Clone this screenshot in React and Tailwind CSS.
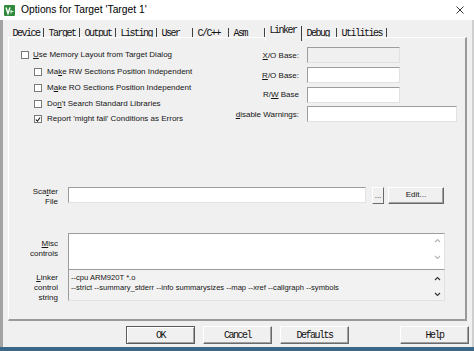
import React from "react";

const sans = "font-['Liberation_Sans',Arial,sans-serif]";
const mono = "font-['Liberation_Mono','Courier_New',monospace]";

const tabs = [
  { name: "Device", w: "w-[36px]" },
  { name: "Target", w: "w-[36px]" },
  { name: "Output", w: "w-[36px]" },
  { name: "Listing", w: "w-[41px]" },
  { name: "User", w: "w-[36px]" },
  { name: "C/C++", w: "w-[36px]" },
  { name: "Asm", w: "w-[36px]" },
  { name: "Linker", w: "w-[37px]", active: true },
  { name: "Debug", w: "w-[35px]" },
  { name: "Utilities", w: "w-[50px]" },
];

const U = ({ children }) => <span className="underline underline-offset-1">{children}</span>;

const Check = ({ checked }) => (
  <div className="w-[8px] h-[8px] bg-white border border-[#7a7a7a] flex items-center justify-center shrink-0">
    {checked && (
      <svg width="7" height="7" viewBox="0 0 7 7">
        <polyline points="1,3.5 2.8,5.5 6,1.2" fill="none" stroke="#111" strokeWidth="1.3" />
      </svg>
    )}
  </div>
);

const Chevron = ({ up, color }) => (
  <svg width="7" height="5" viewBox="0 0 7 5">
    <polyline
      points={up ? "1,4 3.5,1.5 6,4" : "1,1 3.5,3.5 6,1"}
      fill="none"
      stroke={color}
      strokeWidth="1.1"
    />
  </svg>
);

const Field = ({ w, gray }) => (
  <div
    className={`${w} h-[16px] border border-t-[#9c9c9c] border-l-[#9c9c9c] border-r-[#e2e2e2] border-b-[#e2e2e2] ${
      gray ? "bg-[#f0f0f0]" : "bg-white"
    }`}
  />
);

const Button = ({ label, def }) => (
  <div
    className={`w-[69px] h-[18px] flex items-center justify-center bg-[#f0f0f0] border ${
      def
        ? "border-[#5a5a5a] shadow-[inset_1px_1px_0_#fff,inset_-1px_-1px_0_#a0a0a0]"
        : "border-t-white border-l-white border-r-[#6a6a6a] border-b-[#6a6a6a] shadow-[inset_-1px_-1px_0_#a0a0a0]"
    } ${mono} text-[10px] tracking-[-1.5px] text-[#111]`}
  >
    {label}
  </div>
);

export default function App() {
  return (
    <div className={`w-[474px] h-[351px] bg-[#f0f0f0] flex flex-col overflow-hidden ${sans}`}>
      {/* title bar */}
      <div className="h-[20px] bg-white flex items-center shrink-0">
        <svg className="ml-[4px]" width="11" height="11" viewBox="0 0 11 11">
          <rect x="0" y="0" width="11" height="11" rx="1" fill="#2f8a3c" />
          <polyline points="2,2.5 4,8.5 6,2.5" fill="none" stroke="#fff" strokeWidth="1.4" />
          <path d="M7 5 L7 8.5 M7 6.5 L9.5 6.5" stroke="#d8efd8" strokeWidth="1.2" />
        </svg>
        <span className="ml-[6px] text-[10.3px] text-black leading-none">Options for Target 'Target 1'</span>
        <svg className="ml-auto mr-[10px]" width="8" height="8" viewBox="0 0 8 8">
          <path d="M0.5 0.5 L7.5 7.5 M7.5 0.5 L0.5 7.5" stroke="#333" strokeWidth="1" />
        </svg>
      </div>

      {/* body */}
      <div className="flex-1 flex flex-col border-l-[3px] border-l-[#a3a3a3] border-r-[2px] border-r-[#cfcfcf]">
        {/* tabs */}
        <div className={`h-[17px] ml-[5px] flex items-end shrink-0 ${mono} text-[#111]`}>
          {tabs.map((t) =>
            t.active ? (
              <div
                key={t.name}
                className={`${t.w} h-[15px] -mb-[4px] relative z-10 bg-[#f0f0f0] border-r border-r-[#404040] border-l border-l-white pl-[3.5px] text-[10px] tracking-[-1.5px] leading-[10.2px]`}
              >
                {t.name}
              </div>
            ) : (
              <div
                key={t.name}
                className={`${t.w} h-[9px] border-r border-r-[#404040] pl-[4.5px] text-[10px] tracking-[-1.5px] leading-[11.5px] whitespace-nowrap`}
              >
                {t.name}
              </div>
            )
          )}
        </div>

        {/* panel */}
        <div className="ml-[5px] w-[459px] h-[284px] shrink-0 border-t border-l border-t-white border-l-white border-r-2 border-b-2 border-r-[#9a9a9a] border-b-[#9a9a9a] flex flex-col text-[8px] text-[#151515]">
          <div className="h-[80px] mt-[9px] flex">
            {/* left checkboxes */}
            <div className="w-[220px] flex flex-col">
              <div className="h-[16px] pl-[12px] flex items-center gap-[4px]">
                <Check />
                <span><U>U</U>se Memory Layout from Target Dialog</span>
              </div>
              <div className="h-[15.7px] mt-[1.7px] pl-[25px] flex items-center gap-[5px]">
                <Check />
                <span>Ma<U>k</U>e RW Sections Position Independent</span>
              </div>
              <div className="h-[15.7px] pl-[25px] flex items-center gap-[5px]">
                <Check />
                <span>M<U>a</U>ke RO Sections Position Independent</span>
              </div>
              <div className="h-[15.7px] pl-[25px] flex items-center gap-[5px]">
                <Check />
                <span>Do<U>n</U>'t Search Standard Libraries</span>
              </div>
              <div className="h-[15.7px] pl-[25px] flex items-center gap-[5px]">
                <Check checked />
                <span>Report 'might fail' Conditions as Errors</span>
              </div>
            </div>

            {/* right fields */}
            <div className="flex flex-col">
              <div className="flex items-center">
                <div className="w-[70px] text-right pt-[2px]"><U>X</U>/O Base:</div>
                <div className="ml-[8px]"><Field w="w-[93px]" gray /></div>
              </div>
              <div className="flex items-center mt-[4px]">
                <div className="w-[70px] text-right pt-[2px]"><U>R</U>/O Base:</div>
                <div className="ml-[8px]"><Field w="w-[93px]" /></div>
              </div>
              <div className="flex items-center mt-[4px]">
                <div className="w-[70px] text-right">R/<U>W</U> Base</div>
                <div className="ml-[8px]"><Field w="w-[93px]" /></div>
              </div>
              <div className="flex items-center mt-[3px]">
                <div className="w-[70px] text-right whitespace-nowrap pt-[2px]"><U>d</U>isable Warnings:</div>
                <div className="ml-[8px]"><Field w="w-[150px]" /></div>
              </div>
            </div>
          </div>

          {/* scatter file */}
          <div className="mt-[60px] flex items-start">
            <div className="w-[49px] text-right leading-[9.5px]">
              Sca<U>t</U>ter<br />File
            </div>
            <div className="ml-[10px]"><Field w="w-[298px]" /></div>
            <div className="ml-[6px] w-[12px] h-[17px] -mt-[0.5px] bg-[#f0f0f0] border border-t-white border-l-white border-r-[#6a6a6a] border-b-[#6a6a6a] flex items-end justify-center pb-[3px] leading-none">
              ...
            </div>
            <div className="ml-[4px] w-[56px] h-[17px] -mt-[0.5px] bg-[#f0f0f0] border border-t-white border-l-white border-r-[#6a6a6a] border-b-[#6a6a6a] shadow-[inset_-1px_-1px_0_#a0a0a0] flex items-center justify-center">
              Edit...
            </div>
          </div>

          {/* misc controls */}
          <div className="mt-[27px] flex items-start">
            <div className="w-[49px] text-right leading-[10px] pt-[5.7px]">
              <U>M</U>isc<br />controls
            </div>
            <div className="ml-[10px] w-[377px] h-[37px] bg-white border border-t-[#9c9c9c] border-l-[#9c9c9c] border-r-[#e2e2e2] border-b-[#9c9c9c] flex">
              <div className="flex-1" />
              <div className="w-[14px] flex flex-col items-center pt-[4px] gap-[12px]">
                <Chevron up color="#b5b5b5" />
                <Chevron color="#b5b5b5" />
              </div>
            </div>
          </div>

          {/* linker control string */}
          <div className="flex items-start">
            <div className="w-[49px] text-right leading-[10.2px] pt-[2.6px]">
              <U>L</U>inker<br />control<br />string
            </div>
            <div className="ml-[10px] w-[377px] h-[31px] bg-[#f2f2f2] border-l border-l-[#9c9c9c] border-b border-b-[#e2e2e2] border-r border-r-[#e2e2e2] flex">
              <div className="flex-1 pl-[2px] pt-[2.5px] leading-[10px] whitespace-nowrap text-[7.6px]">
                --cpu ARM920T *.o
                <br />
                --strict --summary_stderr --info summarysizes --map --xref --callgraph --symbols
              </div>
              <div className="w-[14px] flex flex-col items-center pt-[6px] gap-[11px]">
                <Chevron up color="#333" />
                <Chevron color="#333" />
              </div>
            </div>
          </div>
        </div>

        {/* buttons */}
        <div className="mt-[5px] ml-[123px] flex">
          <Button label="OK" def />
          <div className="ml-[8px]"><Button label="Cancel" /></div>
          <div className="ml-[8px]"><Button label="Defaults" /></div>
          <div className="ml-[51px]"><Button label="Help" /></div>
        </div>
      </div>

      <div className="h-[4px] bg-[#3b6788] shrink-0" />
    </div>
  );
}
